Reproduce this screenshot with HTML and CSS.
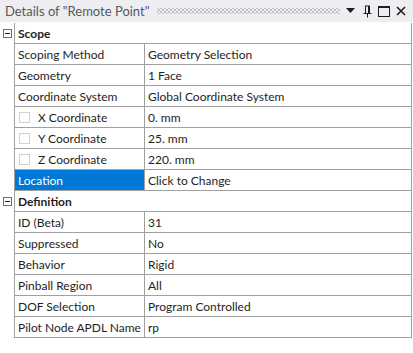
FILE: index.html
```html
<!DOCTYPE html>
<html>
<head>
<meta charset="utf-8">
<link rel="stylesheet" href="styles.css">
</head>
<body>
<div class="panel">
  <div class="titlebar">
    <span class="title">Details of "Remote Point"</span>
    <span class="grip"></span>
    <span class="tb-icons">
      <svg width="9" height="6" viewBox="0 0 9 6" class="ico-drop"><path d="M0 0h9L4.5 5z" fill="#1e1e1e"/></svg>
      <svg width="9" height="13" viewBox="0 0 9 13" class="ico-pin"><path d="M2 1h5M2.5 1v7M6.5 1v7M5.5 1v7M0.5 8.5h8M4.5 8.5v4" stroke="#1e1e1e" stroke-width="1" fill="none"/></svg>
      <svg width="12" height="11" viewBox="0 0 12 11" class="ico-max"><rect x="0.5" y="0.5" width="11" height="10" fill="none" stroke="#1e1e1e" stroke-width="1"/><path d="M0 1.5h12" stroke="#1e1e1e" stroke-width="1"/></svg>
      <svg width="10" height="10" viewBox="0 0 10 10" class="ico-close"><path d="M1 1L9 9M9 1L1 9" stroke="#1e1e1e" stroke-width="1.6"/></svg>
    </span>
  </div>
  <div class="grid">
    <div class="row cat">
      <div class="gutter"><span class="expander"></span></div>
      <div class="cell full">Scope</div>
    </div>
    <div class="row"><div class="gutter"></div><div class="cell name">Scoping Method</div><div class="cell val">Geometry Selection</div></div>
    <div class="row"><div class="gutter"></div><div class="cell name">Geometry</div><div class="cell val">1 Face</div></div>
    <div class="row"><div class="gutter"></div><div class="cell name">Coordinate System</div><div class="cell val">Global Coordinate System</div></div>
    <div class="row"><div class="gutter"></div><div class="cell name"><span class="chk"></span>X Coordinate</div><div class="cell val">0. mm</div></div>
    <div class="row"><div class="gutter"></div><div class="cell name"><span class="chk"></span>Y Coordinate</div><div class="cell val">25. mm</div></div>
    <div class="row"><div class="gutter"></div><div class="cell name"><span class="chk"></span>Z Coordinate</div><div class="cell val">220. mm</div></div>
    <div class="row"><div class="gutter"></div><div class="cell name selected">Location</div><div class="cell val">Click to Change</div></div>
    <div class="row cat">
      <div class="gutter"><span class="expander"></span></div>
      <div class="cell full">Definition</div>
    </div>
    <div class="row"><div class="gutter"></div><div class="cell name">ID (Beta)</div><div class="cell val">31</div></div>
    <div class="row"><div class="gutter"></div><div class="cell name">Suppressed</div><div class="cell val">No</div></div>
    <div class="row"><div class="gutter"></div><div class="cell name">Behavior</div><div class="cell val">Rigid</div></div>
    <div class="row"><div class="gutter"></div><div class="cell name">Pinball Region</div><div class="cell val">All</div></div>
    <div class="row"><div class="gutter"></div><div class="cell name">DOF Selection</div><div class="cell val">Program Controlled</div></div>
    <div class="row"><div class="gutter"></div><div class="cell name">Pilot Node APDL Name</div><div class="cell val">rp</div></div>
  </div>
</div>
</body>
</html>
```
FILE: styles.css
```css
html, body {
  margin: 0;
  padding: 0;
  background: #ffffff;
}
body {
  font-family: Lato, "Noto Sans", sans-serif;
  font-size: 12px;
  color: #1e1e1e;
  width: 413px;
  height: 353px;
  overflow: hidden;
}
.titlebar {
  height: 22px;
  background: #eeeef2;
  display: flex;
  align-items: center;
  padding-left: 5px;
  padding-right: 7px;
  box-sizing: border-box;
}
.title {
  font-size: 13px;
  color: #595959;
  white-space: nowrap;
}
.grip {
  flex: 1;
  height: 6px;
  margin: 0 6px 0 7px;
  background-image:
    radial-gradient(circle, #a8a8b0 0.6px, transparent 0.9px),
    radial-gradient(circle, #a8a8b0 0.6px, transparent 0.9px);
  background-size: 4px 4px, 4px 4px;
  background-position: 0 0, 2px 2px;
}
.tb-icons {
  display: flex;
  align-items: center;
  gap: 6px;
}
.ico-drop { margin-right: 2px; }
.grid {
  display: flex;
  flex-direction: column;
  margin-top: 1px;
}
.row {
  display: flex;
  height: 21px;
}
.gutter {
  width: 14px;
  flex: none;
  display: flex;
  align-items: center;
  justify-content: center;
  padding-left: 1px;
  box-sizing: border-box;
}
.cell {
  box-sizing: border-box;
  border-left: 1px solid #a0a0a0;
  border-bottom: 1px solid #a0a0a0;
  display: flex;
  align-items: center;
  white-space: nowrap;
  overflow: hidden;
}
.full {
  width: 398px;
  border-right: 1px solid #a0a0a0;
  font-weight: bold;
  padding-left: 3px;
}
.name {
  width: 130px;
  padding-left: 3px;
}
.val {
  width: 268px;
  border-right: 1px solid #a0a0a0;
  padding-left: 3px;
}
.selected {
  background: #0078d7;
  color: #ffffff;
}
.expander {
  width: 9px;
  height: 9px;
  box-sizing: border-box;
  border: 1px solid #6e6e6e;
  position: relative;
  background: #ffffff;
}
.expander::after {
  content: "";
  position: absolute;
  left: 1px;
  right: 1px;
  top: 3px;
  height: 1px;
  background: #1e1e1e;
}
.chk {
  width: 11px;
  height: 11px;
  box-sizing: border-box;
  border: 1px solid #d0d0d0;
  margin-left: 1px;
  margin-right: 8px;
  flex: none;
}
```
